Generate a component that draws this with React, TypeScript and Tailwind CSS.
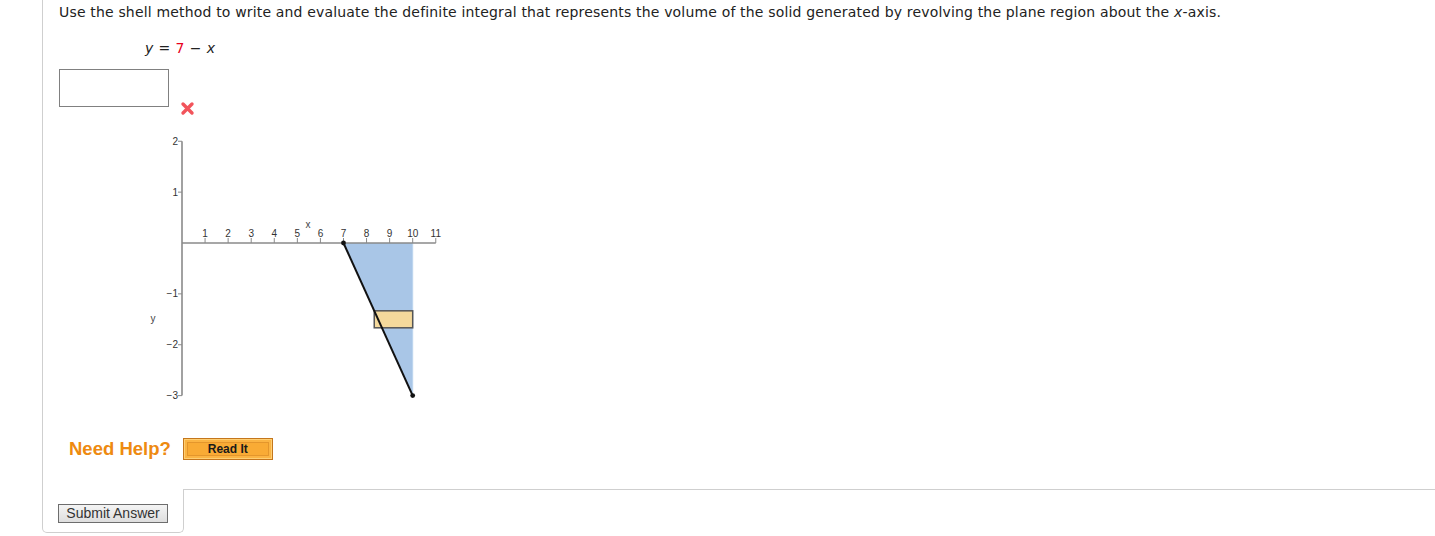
import React from 'react';

// graph geometry, in page pixels (svg viewBox is offset to match the page)
const OX = 182;
const OY = 242;
const UX = 23.07;
const UY = 50.87;
const px = (x: number) => OX + x * UX;
const py = (y: number) => OY - y * UY;

function ShellGraph() {
  const xTicks = [1, 2, 3, 4, 5, 6, 7, 8, 9, 10, 11];
  const yTicks = [2, 1, -1, -2, -3];
  return (
    <svg width="305" height="280" viewBox="140 125 305 280" className="block">
      <polygon points={`${px(7)},${py(0)} ${px(10)},${py(0)} ${px(10)},${py(-3)}`} fill="#a9c6e7" />
      <line x1={px(10)} y1={py(0)} x2={px(10)} y2={py(-3)} stroke="#bcd4ee" strokeWidth="1" />
      {/* axes */}
      <line x1={OX} y1={py(2)} x2={OX} y2={py(-3)} stroke="#8a8a8a" strokeWidth="1.6" />
      <line x1={OX} y1={OY} x2={px(11)} y2={OY} stroke="#8a8a8a" strokeWidth="1.4" />
      {xTicks.map((t) => (
        <g key={t}>
          <line x1={px(t)} y1={OY} x2={px(t)} y2={OY - 5} stroke="#8a8a8a" strokeWidth="1" />
          <text x={px(t)} y={OY - 6} fontSize="10" textAnchor="middle" fill="#333" fontFamily="Liberation Sans, Arial, sans-serif">
            {t}
          </text>
        </g>
      ))}
      {yTicks.map((t) => (
        <g key={t}>
          <line x1={OX - 4} y1={py(t)} x2={OX} y2={py(t)} stroke="#8a8a8a" strokeWidth="1" />
          <text x={OX - 4} y={py(t) + 3.5} fontSize="10" textAnchor="end" fill="#333" fontFamily="Liberation Sans, Arial, sans-serif">
            {t < 0 ? `\u2212${-t}` : t}
          </text>
        </g>
      ))}
      <text x="308" y="227" fontSize="10" textAnchor="middle" fill="#444" fontFamily="Liberation Sans, Arial, sans-serif">x</text>
      <text x="153" y="321" fontSize="10" textAnchor="middle" fill="#444" fontFamily="Liberation Sans, Arial, sans-serif">y</text>
      {/* representative rectangle */}
      <rect x={px(8.333)} y={py(-1.333)} width={px(10) - px(8.333)} height={py(-1.667) - py(-1.333)} fill="#f4d99c" stroke="#555" strokeWidth="1.5" />
      <line x1={px(7)} y1={py(0)} x2={px(10)} y2={py(-3)} stroke="#111" strokeWidth="2" />
      <circle cx={px(7)} cy={py(0)} r="2.4" fill="#111" />
      <circle cx={px(10)} cy={py(-3)} r="2.4" fill="#111" />
    </svg>
  );
}

export default function App() {
  return (
    <div className="w-[1435px] h-[536px] bg-white text-[#222] font-['DejaVu_Sans',Verdana,sans-serif] overflow-hidden">
      <div className="ml-[42px]">
        <div className="border-l border-[#cfcfcf] pl-[16px] pt-[3px]">
          <p className="text-[14px] leading-[19px] tracking-[0.17px] whitespace-nowrap">
            Use the shell method to write and evaluate the definite integral that represents the volume of the solid generated by revolving the plane region about the <i>x</i>-axis.
          </p>

          <div className="mt-[17px] ml-[86px] text-[14px] leading-[19px] tracking-[0.4px] whitespace-nowrap">
            <i>y</i> = <span className="text-[#e8001c]">7</span> &minus; <i>x</i>
          </div>

          <div className="mt-[11px] flex items-start">
            <div className="w-[110px] h-[38px] border border-[#808080] bg-white" />
            <svg width="15" height="15" viewBox="0 0 15 15" className="ml-[11px] mt-[32px]">
              <path d="M3 3 L12 12 M12 3 L3 12" stroke="#f2545b" strokeWidth="3.4" strokeLinecap="round" />
            </svg>
          </div>

          <div className="mt-[10px] ml-[81px]">
            <ShellGraph />
          </div>

          <div className="mt-[32px] flex items-center pl-[10px] pb-[29px]">
            <span className="font-['Liberation_Sans',Arial,sans-serif] font-bold text-[18.5px] leading-[22px] text-[#ee8a10]">Need Help?</span>
            <button className="ml-[12px] w-[90px] h-[22px] border border-[#c4761c] bg-[#f9ab35] shadow-[inset_0_0_0_1px_#ffcf73,inset_0_0_0_3px_#fbb443,inset_0_0_0_4px_#e4962c] font-['Liberation_Sans',Arial,sans-serif] font-bold text-[12px] leading-[20px] text-[#1a1a1a]">
              Read It
            </button>
          </div>
        </div>

        <div className="flex">
          <div className="w-[142px] h-[44px] border-l border-r border-b border-[#cfcfcf] rounded-b-[5px] pl-[15px] pt-[12px]">
            <button className="w-[110px] h-[19px] border border-[#6d6d6d] bg-gradient-to-b from-[#f4f4f4] to-[#dedede] font-['Liberation_Sans',Arial,sans-serif] text-[14px] leading-[17px] text-[#333]">
              Submit Answer
            </button>
          </div>
          <div className="flex-1 border-t border-[#cfcfcf]" />
        </div>
      </div>
    </div>
  );
}
